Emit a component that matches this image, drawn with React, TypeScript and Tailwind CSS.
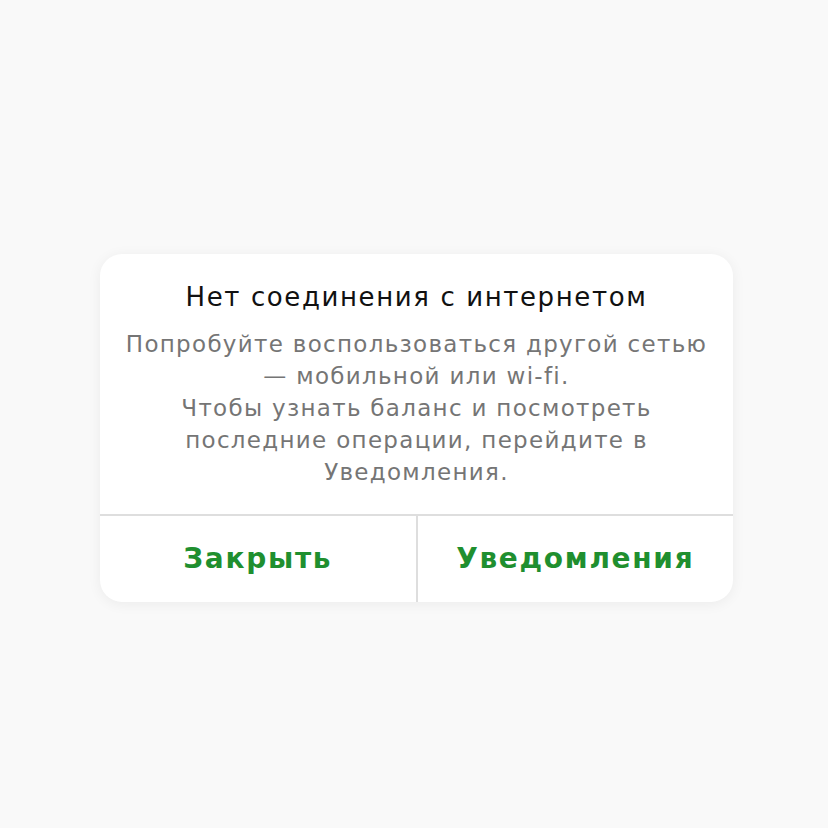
export default function App() {
  return (
    <div
      className="w-[828px] h-[828px] bg-[#f9f9f9] flex items-center justify-center pt-[28px] pl-[5px]"
      style={{ fontFamily: '"DejaVu Sans", Verdana, sans-serif' }}
    >
      <div className="w-[633px] bg-white rounded-[22px] shadow-[0_2px_14px_rgba(0,0,0,0.06)] flex flex-col overflow-hidden">
        <div className="pt-[27px] pb-[26px] px-4 flex flex-col items-center text-center">
          <h1 className="text-[26px] leading-[32px] tracking-[1.6px] text-[#111111]">
            Нет соединения с интернетом
          </h1>
          <p className="mt-[15px] text-[23px] leading-[32px] tracking-[1.3px] text-[#757575]">
            Попробуйте воспользоваться другой сетью
            <br />— мобильной или wi-fi.
            <br />Чтобы узнать баланс и посмотреть
            <br />последние операции, перейдите в
            <br />Уведомления.
          </p>
        </div>
        <div className="h-[2px] bg-[#dedede]" />
        <div className="flex h-[86px]">
          <button className="flex-1 flex items-center justify-center text-[28px] tracking-[1.7px] font-bold text-[#1f8f2f]">
            Закрыть
          </button>
          <div className="w-[2px] bg-[#dedede]" />
          <button className="flex-1 flex items-center justify-center text-[28px] tracking-[1.7px] font-bold text-[#1f8f2f]">
            Уведомления
          </button>
        </div>
      </div>
    </div>
  );
}
